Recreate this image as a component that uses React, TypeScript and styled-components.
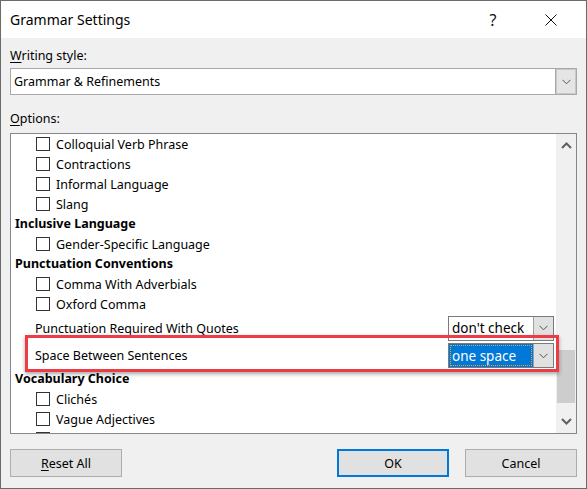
import React from "react";
import styled, { createGlobalStyle } from "styled-components";

const Global = createGlobalStyle`
  html, body { margin: 0; padding: 0; background: #ffffff; }
  body { font-family: "Noto Sans", "Segoe UI", sans-serif; font-size: 12.5px; color: #000; }
  * { box-sizing: border-box; }
`;

const Window = styled.div`
  width: 587px;
  height: 489px;
  border: 1px solid #6b6b6b;
  background: #f0f0f0;
  display: flex;
  flex-direction: column;
  overflow: hidden;
`;

const TitleBar = styled.div`
  height: 37px;
  flex: none;
  background: #ffffff;
  display: flex;
  align-items: center;
  padding-left: 9px;
`;

const Title = styled.div`
  flex: 1;
  font-size: 14px;
  color: #000;
  padding-bottom: 1px;
`;

const TitleButton = styled.div<{ $w: number }>`
  width: ${(p) => p.$w}px;
  height: 37px;
  display: flex;
  align-items: center;
  justify-content: center;
  font-size: 16px;
  color: #111;
`;

const Body = styled.div`
  flex: 1;
  display: flex;
  flex-direction: column;
  padding: 0 9px;
`;

const Label = styled.div<{ $mt: number }>`
  margin-top: ${(p) => p.$mt}px;
  line-height: 18px;
  height: 18px;
`;

const U = styled.span`
  text-decoration: underline;
  text-underline-offset: 2px;
`;

const Combo = styled.div`
  margin-top: 3px;
  height: 27px;
  background: #fff;
  border: 1px solid #a9a9a9;
  display: flex;
  align-items: stretch;
`;

const ComboText = styled.div`
  flex: 1;
  display: flex;
  align-items: center;
  padding-left: 3px;
`;

const ComboButton = styled.div`
  width: 21px;
  background: #e5e5e5;
  border-left: 1px solid #a9a9a9;
  box-shadow: inset 0 0 0 1px #c8c8c8;
  display: flex;
  align-items: center;
  justify-content: center;
`;

const ListBox = styled.div`
  margin-top: 5px;
  height: 301px;
  border: 1px solid #828790;
  background: #fff;
  display: flex;
  position: relative;
`;

const ListContent = styled.div`
  flex: 1;
  overflow: hidden;
  display: flex;
  flex-direction: column;
`;

const Row = styled.div`
  height: 20px;
  flex: none;
  display: flex;
  align-items: center;
  padding-left: 25px;
  gap: 6px;
`;

const Heading = styled.div`
  height: 20px;
  flex: none;
  display: flex;
  align-items: center;
  padding-left: 4px;
  padding-bottom: 2px;
  font-weight: 700;
`;

const Check = styled.span`
  width: 14px;
  height: 14px;
  flex: none;
  border: 1px solid #333;
  background: #fff;
`;

const SelectRow = styled.div<{ $h: number }>`
  height: ${(p) => p.$h}px;
  flex: none;
  display: flex;
  align-items: center;
  padding-left: 24px;
  padding-right: 2px;
`;

const SelectLabel = styled.div`
  flex: 1;
`;

const MiniSelect = styled.div`
  width: 106px;
  height: 25px;
  display: flex;
  border: 1px solid #7a7a7a;
  background: #fff;
`;

const MiniText = styled.div<{ $active?: boolean }>`
  flex: 1;
  display: flex;
  align-items: center;
  padding-left: 3px;
  font-size: 13.5px;
  background: ${(p) => (p.$active ? "#0078d7" : "#fff")};
  color: ${(p) => (p.$active ? "#fff" : "#000")};
  outline: ${(p) => (p.$active ? "1px dotted #e8a040" : "none")};
  outline-offset: -2px;
`;

const MiniButton = styled.div`
  width: 20px;
  background: #e1e1e1;
  border-left: 1px solid #a0a0a0;
  display: flex;
  align-items: center;
  justify-content: center;
`;

const Scrollbar = styled.div`
  width: 20px;
  flex: none;
  background: #f0f0f0;
  display: flex;
  flex-direction: column;
`;

const ScrollArrow = styled.div`
  height: 23px;
  flex: none;
  display: flex;
  align-items: center;
  justify-content: center;
`;

const Track = styled.div`
  flex: 1;
  display: flex;
  flex-direction: column;
`;

const Thumb = styled.div<{ $top: number; $h: number }>`
  margin-top: ${(p) => p.$top}px;
  height: ${(p) => p.$h}px;
  margin-left: 1px;
  margin-right: 1px;
  background: #cdcdcd;
`;

const Highlight = styled.div`
  position: absolute;
  left: 14px;
  top: 201px;
  width: 534px;
  height: 37px;
  border: 3px solid #ec3d47;
  box-shadow: 0 2px 4px rgba(0, 0, 0, 0.35);
  pointer-events: none;
`;

const ButtonRow = styled.div`
  margin-top: 15px;
  display: flex;
  gap: 16px;
`;

const Button = styled.div<{ $primary?: boolean; $push?: boolean }>`
  width: 112px;
  height: 28px;
  display: flex;
  align-items: center;
  justify-content: center;
  background: #e1e1e1;
  border: ${(p) => (p.$primary ? "2px solid #0078d7" : "1px solid #adadad")};
  margin-left: ${(p) => (p.$push ? "auto" : "0")};
`;

const ThinChevron = () => (
  <svg width="9" height="6" viewBox="0 0 9 6">
    <path d="M0.5 0.8 L4.5 4.8 L8.5 0.8" fill="none" stroke="#555" strokeWidth="1" />
  </svg>
);

const ArrowUp = () => (
  <svg width="11" height="7" viewBox="0 0 11 7">
    <path d="M1 6 L5.5 1.5 L10 6" fill="none" stroke="#606060" strokeWidth="2" />
  </svg>
);

const ArrowDown = () => (
  <svg width="11" height="7" viewBox="0 0 11 7">
    <path d="M1 1 L5.5 5.5 L10 1" fill="none" stroke="#606060" strokeWidth="2" />
  </svg>
);

const CloseIcon = () => (
  <svg width="12" height="12" viewBox="0 0 12 12">
    <path d="M0.5 0.5 L11.5 11.5 M11.5 0.5 L0.5 11.5" stroke="#111" strokeWidth="1" />
  </svg>
);

const checkItem = (t: string) => (
  <Row key={t}>
    <Check />
    <span>{t}</span>
  </Row>
);

export default function App() {
  return (
    <>
      <Global />
      <Window>
        <TitleBar>
          <Title>Grammar Settings</Title>
          <TitleButton $w={46}>?</TitleButton>
          <TitleButton $w={70}>
            <CloseIcon />
          </TitleButton>
        </TitleBar>
        <Body>
          <Label $mt={9}>
            <U>W</U>riting style:
          </Label>
          <Combo>
            <ComboText>Grammar &amp; Refinements</ComboText>
            <ComboButton>
              <ThinChevron />
            </ComboButton>
          </Combo>
          <Label $mt={15}>
            <U>O</U>ptions:
          </Label>
          <ListBox>
            <ListContent>
              {["Colloquial Verb Phrase", "Contractions", "Informal Language", "Slang"].map(checkItem)}
              <Heading>Inclusive Language</Heading>
              {checkItem("Gender-Specific Language")}
              <Heading>Punctuation Conventions</Heading>
              {["Comma With Adverbials", "Oxford Comma"].map(checkItem)}
              <SelectRow $h={28}>
                <SelectLabel>Punctuation Required With Quotes</SelectLabel>
                <MiniSelect>
                  <MiniText>don't check</MiniText>
                  <MiniButton>
                    <ThinChevron />
                  </MiniButton>
                </MiniSelect>
              </SelectRow>
              <SelectRow $h={27}>
                <SelectLabel>Space Between Sentences</SelectLabel>
                <MiniSelect>
                  <MiniText $active>one space</MiniText>
                  <MiniButton>
                    <ThinChevron />
                  </MiniButton>
                </MiniSelect>
              </SelectRow>
              <Heading>Vocabulary Choice</Heading>
              {["Clichés", "Vague Adjectives"].map(checkItem)}
              <Row>
                <Check />
              </Row>
            </ListContent>
            <Scrollbar>
              <ScrollArrow>
                <ArrowUp />
              </ScrollArrow>
              <Track>
                <Thumb $top={193} $h={53} />
              </Track>
              <ScrollArrow>
                <ArrowDown />
              </ScrollArrow>
            </Scrollbar>
            <Highlight />
          </ListBox>
          <ButtonRow>
            <Button>
              <span>
                <U>R</U>eset All
              </span>
            </Button>
            <Button $primary $push>
              OK
            </Button>
            <Button>Cancel</Button>
          </ButtonRow>
        </Body>
      </Window>
    </>
  );
}
